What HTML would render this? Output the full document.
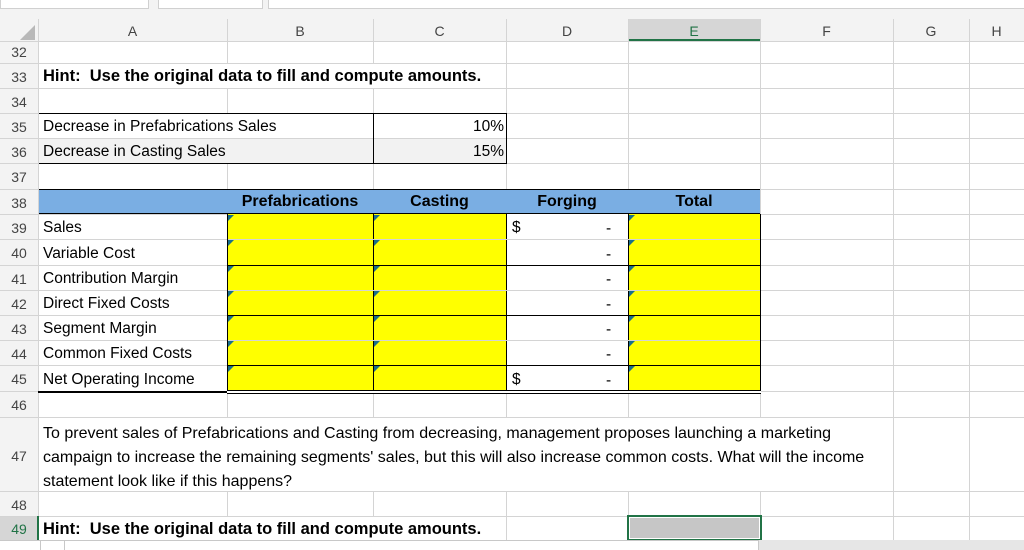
<!DOCTYPE html>
<html><head><meta charset="utf-8"><style>
*{margin:0;padding:0;box-sizing:border-box}
body{width:1024px;height:550px;overflow:hidden;background:#fff;position:relative;font-family:"Liberation Sans",sans-serif;color:#000}
div{position:absolute}
.v{width:1px;background:#d4d4d4}
.h{height:1px;background:#d4d4d4}
.rn{left:0;width:38px;text-align:center;font-size:14px;color:#444;background:#f3f3f3}
.ch{top:19px;height:22px;font-size:14px;color:#444;text-align:center;line-height:24px}
.t{font-size:15.5px;white-space:nowrap}
.hb{font-size:16px;font-weight:bold}
.y{background:#ff0;border-left:1px solid #000}
.tri{width:0;height:0;border-top:6px solid #1a6f8a;border-right:6px solid transparent}
.bk{background:#000}
</style></head><body>
<div style="left:0;top:0;width:1024px;height:19px;background:#f3f3f3"></div>
<div style="left:0;top:0;width:149px;height:9px;background:#fff;border:1px solid #d0d0d0;border-top:none"></div>
<div style="left:158px;top:0;width:105px;height:9px;background:#fff;border:1px solid #d0d0d0;border-top:none"></div>
<div style="left:268px;top:0;width:760px;height:9px;background:#fff;border:1px solid #d0d0d0;border-top:none"></div>
<div style="left:0;top:19px;width:1024px;height:22px;background:#f3f3f3"></div>
<div style="left:628px;top:19px;width:132px;height:22px;background:#d6d6d6"></div>
<div style="left:628px;top:39px;width:133px;height:2px;background:#217346"></div>
<div style="left:20px;top:25px;width:0;height:0;border-left:15px solid transparent;border-bottom:15px solid #b8b8b8"></div>
<div class="ch" style="left:38px;width:189px">A</div>
<div class="ch" style="left:227px;width:146px">B</div>
<div class="ch" style="left:373px;width:133px">C</div>
<div class="ch" style="left:506px;width:122px">D</div>
<div class="ch" style="left:628px;width:132px;color:#217346">E</div>
<div class="ch" style="left:760px;width:133px">F</div>
<div class="ch" style="left:893px;width:76px">G</div>
<div class="ch" style="left:969px;width:55px">H</div>
<div style="left:0;top:41px;width:38px;height:499px;background:#f3f3f3"></div>
<div style="left:0;top:516px;width:38px;height:24px;background:#d6d6d6"></div>
<div class="v" style="left:38px;top:19px;height:521px"></div>
<div class="v" style="left:227px;top:19px;height:44px"></div>
<div class="v" style="left:227px;top:88px;height:25px"></div>
<div class="v" style="left:227px;top:163px;height:26px"></div>
<div class="v" style="left:227px;top:391px;height:26px"></div>
<div class="v" style="left:227px;top:491px;height:25px"></div>
<div class="v" style="left:373px;top:19px;height:44px"></div>
<div class="v" style="left:373px;top:88px;height:25px"></div>
<div class="v" style="left:373px;top:163px;height:26px"></div>
<div class="v" style="left:373px;top:391px;height:26px"></div>
<div class="v" style="left:373px;top:491px;height:25px"></div>
<div class="v" style="left:506px;top:19px;height:170px"></div>
<div class="v" style="left:506px;top:391px;height:26px"></div>
<div class="v" style="left:506px;top:491px;height:49px"></div>
<div class="v" style="left:628px;top:19px;height:170px"></div>
<div class="v" style="left:628px;top:391px;height:26px"></div>
<div class="v" style="left:628px;top:491px;height:25px"></div>
<div class="v" style="left:760px;top:19px;height:398px"></div>
<div class="v" style="left:760px;top:491px;height:49px"></div>
<div class="v" style="left:893px;top:19px;height:521px"></div>
<div class="v" style="left:969px;top:19px;height:521px"></div>
<div class="h" style="left:0;top:41px;width:1024px"></div>
<div class="h" style="left:0;top:63px;width:1024px"></div>
<div class="h" style="left:0;top:88px;width:1024px"></div>
<div class="h" style="left:0;top:113px;width:1024px"></div>
<div class="h" style="left:0;top:138px;width:1024px"></div>
<div class="h" style="left:0;top:163px;width:1024px"></div>
<div class="h" style="left:0;top:189px;width:1024px"></div>
<div class="h" style="left:0;top:214px;width:1024px"></div>
<div class="h" style="left:0;top:239px;width:1024px"></div>
<div class="h" style="left:0;top:265px;width:1024px"></div>
<div class="h" style="left:0;top:290px;width:1024px"></div>
<div class="h" style="left:0;top:315px;width:1024px"></div>
<div class="h" style="left:0;top:340px;width:1024px"></div>
<div class="h" style="left:0;top:365px;width:1024px"></div>
<div class="h" style="left:0;top:391px;width:1024px"></div>
<div class="h" style="left:0;top:417px;width:1024px"></div>
<div class="h" style="left:0;top:491px;width:1024px"></div>
<div class="h" style="left:0;top:516px;width:1024px"></div>
<div class="rn" style="top:42px;height:21px;line-height:21px">32</div>
<div class="rn" style="top:64px;height:24px;line-height:26px">33</div>
<div class="rn" style="top:89px;height:24px;line-height:26px">34</div>
<div class="rn" style="top:114px;height:24px;line-height:26px">35</div>
<div class="rn" style="top:139px;height:24px;line-height:26px">36</div>
<div class="rn" style="top:164px;height:25px;line-height:27px">37</div>
<div class="rn" style="top:190px;height:24px;line-height:26px">38</div>
<div class="rn" style="top:215px;height:24px;line-height:26px">39</div>
<div class="rn" style="top:240px;height:25px;line-height:27px">40</div>
<div class="rn" style="top:266px;height:24px;line-height:26px">41</div>
<div class="rn" style="top:291px;height:24px;line-height:26px">42</div>
<div class="rn" style="top:316px;height:24px;line-height:26px">43</div>
<div class="rn" style="top:341px;height:24px;line-height:26px">44</div>
<div class="rn" style="top:366px;height:25px;line-height:27px">45</div>
<div class="rn" style="top:392px;height:25px;line-height:27px">46</div>
<div class="rn" style="top:418px;height:73px;line-height:76px">47</div>
<div class="rn" style="top:492px;height:24px;line-height:26px">48</div>
<div class="rn" style="top:517px;height:23px;line-height:25px;color:#217346;background:#d6d6d6">49</div>
<div style="left:37px;top:516px;width:2px;height:24px;background:#217346"></div>
<div class="t" style="left:43px;top:67px;font-weight:bold;font-size:16.5px">Hint:&nbsp; Use the original data to fill and compute amounts.</div>
<div style="left:39px;top:139px;width:467px;height:24px;background:#f2f2f2"></div>
<div class="bk" style="left:39px;top:113px;width:468px;height:1px"></div>
<div class="bk" style="left:39px;top:163px;width:468px;height:1px"></div>
<div class="bk" style="left:373px;top:113px;width:1px;height:50px"></div>
<div class="bk" style="left:506px;top:113px;width:1px;height:50px"></div>
<div class="t" style="left:43px;top:118px">Decrease in Prefabrications Sales</div>
<div class="t" style="left:43px;top:143px">Decrease in Casting Sales</div>
<div class="t" style="left:440px;top:118px;width:64px;text-align:right">10%</div>
<div class="t" style="left:440px;top:143px;width:64px;text-align:right">15%</div>
<div style="left:39px;top:189px;width:721px;height:25px;background:#7aaee3;border-top:1px solid #000;border-bottom:1px solid #000"></div>
<div class="t hb" style="left:227px;top:193px;width:146px;text-align:center">Prefabrications</div>
<div class="t hb" style="left:373px;top:193px;width:133px;text-align:center">Casting</div>
<div class="t hb" style="left:506px;top:193px;width:122px;text-align:center">Forging</div>
<div class="t hb" style="left:628px;top:193px;width:132px;text-align:center">Total</div>
<div class="y" style="left:227px;top:214px;width:146px;height:177px"></div>
<div class="y" style="left:373px;top:214px;width:133px;height:177px"></div>
<div style="left:507px;top:214px;width:121px;height:177px;background:#fff"></div>
<div class="y" style="left:628px;top:214px;width:133px;height:177px;border-right:1px solid #000"></div>
<div class="bk" style="left:506px;top:214px;width:1px;height:177px"></div>
<div class="h" style="left:228px;top:239px;width:532px"></div>
<div class="h" style="left:228px;top:290px;width:532px"></div>
<div class="h" style="left:228px;top:340px;width:532px"></div>
<div class="bk" style="left:227px;top:265px;width:534px;height:1px"></div>
<div class="bk" style="left:227px;top:315px;width:534px;height:1px"></div>
<div class="bk" style="left:227px;top:365px;width:534px;height:1px"></div>
<div style="left:38px;top:391px;width:189px;height:2px;background:#000"></div>
<div style="left:227px;top:390px;width:534px;height:4px;border-top:1px solid #000;border-bottom:1px solid #000;background:#fff"></div>
<div class="tri" style="left:228px;top:215px"></div><div class="tri" style="left:374px;top:215px"></div><div class="tri" style="left:629px;top:215px"></div>
<div class="tri" style="left:228px;top:240px"></div><div class="tri" style="left:374px;top:240px"></div><div class="tri" style="left:629px;top:240px"></div>
<div class="tri" style="left:228px;top:266px"></div><div class="tri" style="left:374px;top:266px"></div><div class="tri" style="left:629px;top:266px"></div>
<div class="tri" style="left:228px;top:291px"></div><div class="tri" style="left:374px;top:291px"></div><div class="tri" style="left:629px;top:291px"></div>
<div class="tri" style="left:228px;top:316px"></div><div class="tri" style="left:374px;top:316px"></div><div class="tri" style="left:629px;top:316px"></div>
<div class="tri" style="left:228px;top:341px"></div><div class="tri" style="left:374px;top:341px"></div><div class="tri" style="left:629px;top:341px"></div>
<div class="tri" style="left:228px;top:366px"></div><div class="tri" style="left:374px;top:366px"></div><div class="tri" style="left:629px;top:366px"></div>
<div class="t" style="left:43px;top:219px">Sales</div>
<div class="t" style="left:43px;top:245px">Variable Cost</div>
<div class="t" style="left:43px;top:270px">Contribution Margin</div>
<div class="t" style="left:43px;top:295px">Direct Fixed Costs</div>
<div class="t" style="left:43px;top:320px">Segment Margin</div>
<div class="t" style="left:43px;top:345px">Common Fixed Costs</div>
<div class="t" style="left:43px;top:371px">Net Operating Income</div>
<div class="t" style="left:512px;top:219px">$</div>
<div class="t" style="left:512px;top:371px">$</div>
<div class="t" style="left:606px;top:220px">-</div>
<div class="t" style="left:606px;top:246px">-</div>
<div class="t" style="left:606px;top:271px">-</div>
<div class="t" style="left:606px;top:296px">-</div>
<div class="t" style="left:606px;top:321px">-</div>
<div class="t" style="left:606px;top:346px">-</div>
<div class="t" style="left:606px;top:372px">-</div>
<div class="t" style="left:43px;top:422px;line-height:24px;font-size:16px">To prevent sales of Prefabrications and Casting from decreasing, management proposes launching a marketing<br>campaign to increase the remaining segments' sales, but this will also increase common costs. What will the income<br>statement look like if this happens?</div>
<div class="t" style="left:43px;top:520px;font-weight:bold;font-size:16.5px">Hint:&nbsp; Use the original data to fill and compute amounts.</div>
<div style="left:627px;top:515px;width:135px;height:26px;border:2px solid #217346;background:#c6c6c6;box-shadow:inset 0 0 0 1px #fff"></div>
<div style="left:0;top:540px;width:1024px;height:10px;background:#fff;border-top:1px solid #c8c8c8"></div>
<div style="left:758px;top:540px;width:266px;height:10px;background:#e6e6e6;border-left:1px solid #c8c8c8"></div>
<div style="left:40px;top:541px;width:25px;height:9px;border-left:1px solid #c8c8c8;border-right:1px solid #c8c8c8"></div>
</body></html>
